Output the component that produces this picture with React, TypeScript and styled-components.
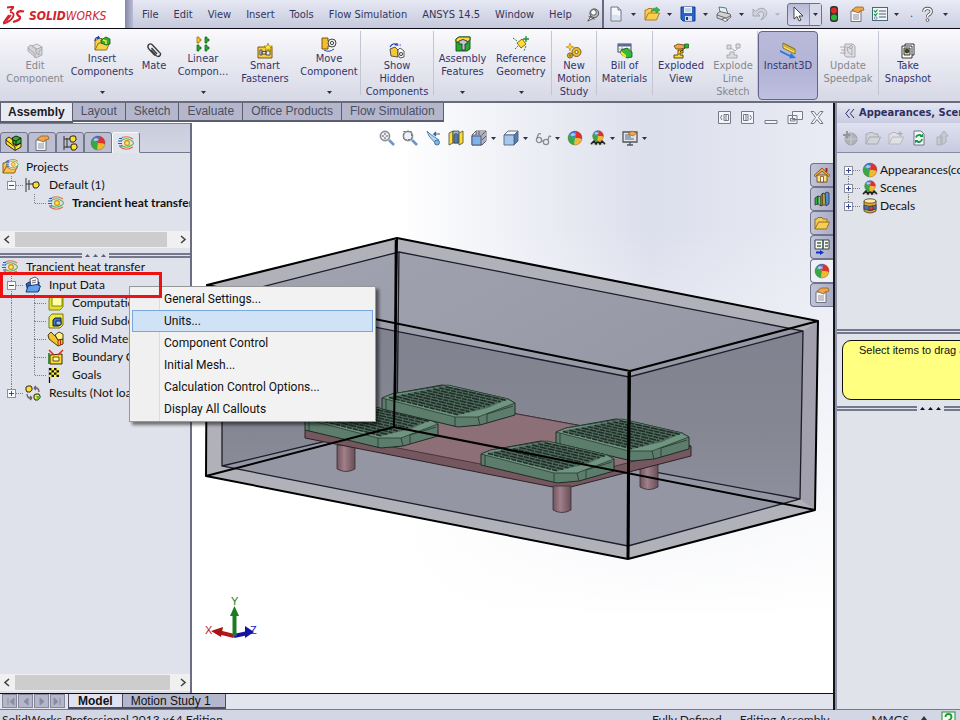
import React from "react";
import styled, { createGlobalStyle, css } from "styled-components";

const tahoma = '"DejaVu Sans Condensed", "DejaVu Sans", sans-serif';
const segoe = 'Lato, "Noto Sans", sans-serif';
const menuFont = 'Roboto, "Noto Sans", sans-serif';
const arial = '"Liberation Sans", Arial, sans-serif';

const Global = createGlobalStyle`
  * { box-sizing: border-box; }
  body { margin: 0; overflow: hidden; background: #dfe2ec; font-family: ${segoe}; font-size: 12px; }
  button { margin: 0; padding: 0; border: 0; background: none; font: inherit; color: inherit; cursor: default; }
  ul { margin: 0; padding: 0; list-style: none; }
  svg { display: block; flex: none; }
`;

/* ---------- icons ---------- */

const Ball = ({ x = 8, y = 8, r = 7 }: { x?: number; y?: number; r?: number }) => (
  <g transform={`translate(${x} ${y}) scale(${r / 7})`}>
    <path d="M0 0L-6-3.5A7 7 0 0 1 1-7Z" fill="#3474d8" />
    <path d="M0 0L1-7A7 7 0 0 1 7 1Z" fill="#e0322c" />
    <path d="M0 0L7 1A7 7 0 0 1-1 7Z" fill="#f2b92c" />
    <path d="M0 0L-1 7A7 7 0 0 1-6-3.5Z" fill="#37a843" />
    <circle r="7" fill="none" stroke="#444" strokeOpacity=".45" strokeWidth=".7" />
    <ellipse cx="-2" cy="-3.5" rx="2.2" ry="1.5" fill="#fff" opacity=".6" />
  </g>
);

const flow = (
  <g fill="none" strokeWidth="1.1">
    <path d="M2 4Q8-.5 15 4M2 12Q8 16.500 15 12" stroke="#e06a50" />
    <path d="M3 6Q8 1.500 14 6M3 10Q8 14.500 14 10" stroke="#58b858" />
    <path d="M1 3.500H4M0 6H4M0 8.500H4M1 11H4" stroke="#2a5ad0" />
    <path d="M14 6Q17 8 14 10" stroke="#58b858" />
    <circle cx="9" cy="8" r="2.400" fill="#ffe84a" stroke="#d08a20" />
  </g>
);

const hand = <path d="M3 4L7 1L14 1L15 4L11 5L10 7L7 6Z" fill="#eda64e" stroke="#90540e" strokeWidth=".7" />;

const gear = (gray = false) => (
  <g stroke={gray ? "#aaa" : "#5a4200"} strokeWidth=".8">
    <circle cx="10.500" cy="9" r="4.500" fill={gray ? "#ddd" : "#f1bd32"} />
    <circle cx="10.500" cy="9" r="1.600" fill="#fff" />
    <circle cx="4" cy="12.500" r="2.600" fill={gray ? "#ddd" : "#f1bd32"} />
    <circle cx="4" cy="12.500" r=".8" fill="#fff" />
  </g>
);

const part = (main: string, light: string, edge: string) => (
  <g stroke={edge} strokeWidth=".9" strokeLinejoin="round">
    <path d="M1 4L4 2L9 6L15 4V12L9 15L1 8Z" fill={main} />
    <path d="M5 3L10 1L15 4L10 6Z" fill={light} />
    <path d="M9 6V10L12 12V8L15 6M1 5L8 11V15" fill="none" />
  </g>
);

const folder = (fill: string, edge: string) => (
  <g stroke={edge} strokeWidth=".9" strokeLinejoin="round">
    <path d="M1 14V4H3L4 2.500H8L9 4H13V7" fill={fill} />
    <path d="M1 14L4.500 7H15.500L12.500 14Z" fill={fill} />
  </g>
);

const magnifier = (
  <g>
    <circle cx="6" cy="6" r="4.600" fill="#eef2f8" stroke="#8a8e98" strokeWidth="1.600" />
    <path d="M10 10L15 15" stroke="#6f96c4" strokeWidth="2.600" />
  </g>
);

const cube = (front: string) => (
  <g stroke="#56657c" strokeWidth=".9" strokeLinejoin="round">
    <path d="M1 5L5 1H15L11 5Z" fill="#f4f8fd" />
    <path d="M11 5L15 1V11L11 15Z" fill="#4a7cc4" />
    <path d="M1 5H11V15H1Z" fill={front} />
  </g>
);

const page = (
  <path d="M3 1H10L13 4V15H3Z" fill="#f4f8fc" stroke="#667" strokeWidth=".9" />
);

const propPage = (
  <g>
    <path d="M2 5H12V15.500H2Z" fill="#f6f6f6" stroke="#667" strokeWidth=".9" />
    <path d="M4 9H10M4 11H10M4 13H10" stroke="#8a93a8" />
    {hand}
  </g>
);

const yBlock = (x: number, y: number, c = "#ffdf2c") => (
  <path d={`M${x} ${y + 1}L${x + 2} ${y}H${x + 5}L${x + 6} ${y + 2}V${y + 4}L${x + 4} ${y + 6}H${x + 1}L${x} ${y + 4}Z`} fill={c} stroke="#111" strokeWidth=".9" />
);

const icons: Record<string, React.ReactNode> = {
  ball: <Ball />,
  flow,
  prop: propPage,
  folder: folder("#f6cd57", "#8a6414"),
  folderGray: folder("#d2d4da", "#a2a4aa"),
  ballGray: (
    <g fill="#b0b2b8" stroke="#94969c" strokeWidth=".8">
      <circle cx="9" cy="9" r="6" /><path d="M1 5H9M5 1V9" strokeWidth="2" /><path d="M9 3V15M3 9H15" stroke="#d4d4da" />
    </g>
  ),
  newFolderGray: <g>{folder("#e0e1e6", "#b2b4ba")}<path d="M12 1V6M9.500 3.500H14.500" stroke="#aaa" /></g>,
  refresh: (
    <g>{page}<path d="M5 7.500A3.200 3.200 0 0 1 10.500 6M11 9A3.200 3.200 0 0 1 5.500 11" fill="none" stroke="#159a3a" strokeWidth="1.800" /><path d="M8.500 7H12V3.500ZM7.500 10H4V13.500Z" fill="#159a3a" /></g>
  ),
  upGray: <path d="M3 15V7H7V15ZM6 6L10 1L14 6H12V12L8 15V6Z" fill="#c8cad0" stroke="#a4a6ac" strokeWidth=".8" />,
  helpBox: (
    <g><rect x="2" y="0" width="13" height="16" fill="#f2fbf0" stroke="#2a8a3a" /><path d="M5.500 5Q5.500 2 8.500 2T11.500 5Q11.500 7 8.500 8.500V10" fill="none" stroke="#1d9a34" strokeWidth="1.800" /></g>
  ),
  newDoc: <g>{page}<path d="M10 1V4H13" fill="#c6d8e8" stroke="#667" strokeWidth=".8" /><path d="M4 9Q8 8 12 10V14H4Z" fill="#d5e4f0" /></g>,
  open: <g>{folder("#f9cd4d", "#a4721c")}<path d="M7 6Q8 1 12 2.500V1L16 4L12 7V5Q9 4 7 6Z" fill="#3ab648" stroke="#1d7d2a" strokeWidth=".5" /></g>,
  save: (
    <g><path d="M1 1H15V15H3L1 13Z" fill="#2a63c8" stroke="#173c86" /><path d="M4 1H12V7H4Z" fill="#eef3fb" /><path d="M5 10H12V15H5Z" fill="#cfd9ea" /><path d="M6 11H8V14H6Z" fill="#173c86" /><path d="M5 3H11M5 5H11" stroke="#8aa3cc" strokeWidth=".8" /></g>
  ),
  print: (
    <g stroke="#555" strokeWidth=".8"><path d="M3 1L10 2L12 8L4 6Z" fill="#dff0fb" /><path d="M1 8L4 5.500L14 8L15 11L10 15L1 12Z" fill="#d2d2d2" /><path d="M1 9L10 12L15 9.500" fill="none" /><path d="M6 13L9 12L12 14L9 15.500Z" fill="#fff" /></g>
  ),
  undo: <path d="M1 3V10H8L5.500 7.500Q8 5 10.500 6Q13.500 8 9 14Q16 10 14.500 5.500Q12 .5 6 3.200L3.500 5.500Z" fill="#d0d2da" stroke="#9a9da8" strokeWidth=".8" />,
  cursor: <path d="M4 1V13L7 10.500L9 15L11 14L9 10H13Z" fill="#fff" stroke="#333" strokeWidth=".9" />,
  traffic: (
    <g><rect x="4" y="0" width="8" height="16" rx="3" fill="#333" /><circle cx="8" cy="4.500" r="3" fill="#dc2c22" /><circle cx="8" cy="11.500" r="3" fill="#28b83c" /></g>
  ),
  options: (
    <g><rect x=".5" y="1.500" width="15" height="13" fill="#eef6f4" stroke="#486a78" /><path d="M7 5H14M7 8H14M7 11H14" stroke="#557" /><path d="M2 4.500L3.500 6L5.500 3.500M2 8L3.500 9.500L5.500 7" fill="none" stroke="#1a9a4a" strokeWidth="1.200" /><path d="M2.500 11H5V13H2.500Z" fill="#fff" stroke="#486a78" strokeWidth=".6" /></g>
  ),
  help: <g fill="none"><path d="M4 5Q4 1.500 8 1.500T12 5Q12 7 9 8.500Q8 9 8 11" stroke="#555" strokeWidth="3.400" /><path d="M4 5Q4 1.500 8 1.500T12 5Q12 7 9 8.500Q8 9 8 11" stroke="#fff" strokeWidth="1.600" /><circle cx="8" cy="14" r="1.500" fill="#fff" stroke="#555" /></g>,
  pin: <g stroke="#444" strokeWidth="1"><path d="M6 9L2 15L8 12M3 9.500L10 13" fill="#fff" /><circle cx="9.500" cy="6" r="5" fill="#b4b7c2" /><circle cx="8.500" cy="5" r="3.200" fill="#fff" /></g>,
  editComp: part("#d4d4d8", "#e6e6ea", "#a6a6aa"),
  insertComp: (
    <g>{folder("#f8d24a", "#8a6412")}<path d="M7 4L12 1L16 3V8L12 9L7 7Z" fill="#2fae32" stroke="#0c5a10" strokeWidth=".8" /><path d="M9 4L12 5V8" fill="none" stroke="#ffe84a" strokeWidth="1.500" /><path d="M1 5Q1 1 5 1.500L4 0M5 1.500L3.500 3" fill="none" stroke="#1538b8" strokeWidth="1.200" /></g>
  ),
  mate: <path d="M5 7L10 12.500Q12.500 14.500 14 12.500T13 9L6.500 2Q4.500 0 2.800 1.600T2.500 5.500L9 12.500M5.500 5L11 11" fill="none" stroke="#3c3c3c" strokeWidth="1.400" />,
  linear: (
    <g strokeWidth=".7">
      {[[2, 1], [10, 1], [2, 9], [10, 9]].map(([x, y], i) => (
        <path key={i} d={`M${x} ${y}H${x + 2}V${y + 2}H${x + 4}V${y + 4}H${x + 2}V${y + 6}H${x}Z`} fill={i ? "#22ae2c" : "#ffd42a"} stroke={i ? "#0c5a10" : "#8a5c00"} />
      ))}
    </g>
  ),
  smart: (
    <g><path d="M1 4H15V15H1Z" fill="#f5cc45" stroke="#7c5808" /><path d="M3 7H5V12H3ZM5 8.500H9V11H5ZM9 8H13V12H9Z" fill="#ececf0" stroke="#333" strokeWidth=".8" /><path d="M11 0L12 3L15.500 3L13 5L14 8L11 6L8.500 8L9 5L7 3H10Z" fill="#ffe93a" stroke="#8a6a00" strokeWidth=".6" /></g>
  ),
  move: (
    <g><path d="M1 2H7V5H10V10H7V13H1Z" fill="#f4bc30" stroke="#6b4a00" strokeWidth=".9" /><circle cx="11" cy="7" r="4" fill="#ececf0" stroke="#444" /><circle cx="11" cy="7" r="1.600" fill="#fff" stroke="#444" /><path d="M3 14Q8 17 13 13" stroke="#2244b0" fill="none" /></g>
  ),
  hidden: (
    <g stroke="#333" strokeWidth=".8"><path d="M1 6L6 4L9 7V14L2 13Z" fill="#f4c832" /><path d="M9 7L11 5L15 8V14L11 15L9 12Z" fill="#fff" /><circle cx="12" cy="11" r="1.700" fill="#ccc" /><path d="M1 4Q4-1 8 2L8 0M8 2H6" stroke="#2040b8" strokeWidth="1.200" fill="none" /><path d="M8 2H12" stroke="#2040b8" strokeDasharray="1.500 1" /></g>
  ),
  asm: (
    <g stroke="#0c5012" strokeWidth=".9"><path d="M1 3L4 1H15V13L12 15H1Z" fill="#28a834" /><path d="M1 3L4 1H15V4L12 6H1Z" fill="#ffd83c" /><path d="M4 5Q8 2 12 5V8H10V14H7V8H4Z" fill="#c2c6cc" stroke="#333" /></g>
  ),
  ref: (
    <g><path d="M4 7L9 3L13 8L8 12Z" fill="#ffdf30" stroke="#7a5c00" strokeWidth=".9" /><path d="M0 2L4 5M13 10L11 15M2 13L5 10" stroke="#1c8c2c" strokeDasharray="2 1" /><path d="M13 0V6M10 3H16" stroke="#1c8c2c" strokeWidth="1.300" /></g>
  ),
  motion: <g>{gear()}<path d="M4 0L5 3L8 4L5 5L4 8L3 5L0 4L3 3Z" fill="#ffd62e" stroke="#b06a00" strokeWidth=".5" /></g>,
  bom: (
    <g><rect x="1" y="1" width="13" height="8" fill="#fff" stroke="#445" /><rect x="1" y="1" width="13" height="2.500" fill="#5a6a94" /><path d="M5 1V9M1 6H14" stroke="#889" strokeWidth=".7" /><path d="M4 7L10 5L15 9V14L10 15L4 11Z" fill="#34b83c" stroke="#0c5a10" strokeWidth=".8" /><path d="M4 8L9 12V15L4 11Z" fill="#ffdf30" /></g>
  ),
  exploded: (
    <g><path d="M5 7H10V10H7V12H10V15H1V12H5Z" fill="#ffd92c" stroke="#4c3a00" strokeWidth=".9" /><path d="M7 9L13 4" stroke="#222" /><path d="M1 3L5 1L11 2L12 5L7 6L3 6Z" fill="#eda64e" stroke="#6b3a05" strokeWidth=".8" /><path d="M11.500 1H15.500V5H11.500Z" fill="#2cae38" stroke="#0c5a10" strokeWidth=".7" /></g>
  ),
  explodeLine: (
    <g fill="#dcdce0" stroke="#a4a4aa" strokeWidth=".9"><path d="M2 2H6V6H2ZM11 1H15V5H11ZM5 9H9V12H12V15H2V12H5Z" /><path d="M6 5L10 8L13 5" fill="none" /></g>
  ),
  instant: (
    <g><path d="M3 0L15 6V11L3 5Z" fill="#ffe253" stroke="#6f5900" strokeWidth=".8" /><path d="M5 1V4M7 2V5M9 3V6M11 4V7M13 5V8" stroke="#6f5900" strokeWidth=".7" /><path d="M0 7L10 12L11 10L16 15L9 15.500L10 14L0 9Z" fill="#2b7ad8" /></g>
  ),
  speedpak: (
    <g fill="#dedee2" stroke="#a4a4aa" strokeWidth=".9"><path d="M5 1H13L15 3V14H6L4 11Z" /><path d="M0 4H6M1 7H6M0 10H6M7 4L12 6V12L8 9Z" /><circle cx="11" cy="4" r="1.500" /></g>
  ),
  snapshot: (
    <g stroke="#222" strokeWidth=".9"><path d="M5 1H14V12H5Z" fill="#fff" /><path d="M2 3H12V15H2Z" fill="#fff" /><path d="M4 5H10V12H4Z" fill="#d0d49c" /><circle cx="7" cy="8" r="1.800" fill="#444" /></g>
  ),
  asmTree: (
    <g stroke="#14140a" strokeWidth=".9" strokeLinejoin="round"><path d="M0 4L3 2L7 5V9L10 11L15 8V12L9 15.500L0 9Z" fill="#ffdf2c" /><path d="M6 3L10 1L15 3V8L10 10L7 8V5Z" fill="#2fae32" /><path d="M7 5L10 6L15 3M10 6V10M0 5L9 12V15" fill="none" /></g>
  ),
  config: <g><path d="M2 1V15M5 3V13M2 4H9M2 12H9" stroke="#333" fill="none" />{yBlock(8, 1)}{yBlock(9, 9)}</g>,
  configOne: <g><path d="M1 1V15M4 3V13M1 7H8" stroke="#333" fill="none" />{yBlock(8, 5)}</g>,
  projects: <g>{folder("#f5c64c", "#84560c")}<g transform="translate(4 -1) scale(.8)"><circle cx="8" cy="8" r="6" fill="#f2f4e8" />{flow}</g></g>,
  input: (
    <g><path d="M1 7L4 5H14V14H3Z" fill="#2a62c8" stroke="#102c6a" strokeWidth=".9" /><path d="M5 2L10 0L13 2V9L6 10Z" fill="#fff" stroke="#334" strokeWidth=".8" /><path d="M7 4L11 3M7 6L11 5" stroke="#334" strokeWidth=".7" /><path d="M1 15L3 9L12 7.500L15.500 9L13 15Z" fill="#62a2ec" stroke="#102c6a" strokeWidth=".9" /></g>
  ),
  domain: <g stroke="#7a7a00" strokeWidth=".9"><path d="M1 4L4 1H15V12L12 15H1Z" fill="#e2e22c" /><path d="M4 2H14V11H4Z" fill="#ffffa8" /></g>,
  fluid: <g><path d="M1 4L4 1H15V12L12 15H1Z" fill="#f0ee3c" stroke="#6a6a00" strokeWidth=".9" /><path d="M5 7L7 5H13V11L11 13H5Z" fill="#3c78c8" stroke="#101c4a" /><path d="M8 8H13V12H8Z" fill="#9cbce8" stroke="#101c4a" strokeWidth=".9" /></g>,
  solid: <g stroke="#3c2c00" strokeWidth=".9"><path d="M0 4L3 1L8 6L10 9L15 8V13L10 15L1 8Z" fill="#f2c42e" /><path d="M7 4L11 1L15 3V8L10 9Z" fill="#fff28a" /><path d="M10 9V15M12.500 9V14" stroke="#b01c10" /></g>,
  boundary: <g><path d="M2 15V6L14 5V15Z" fill="#ffdb30" stroke="#3c2c00" /><path d="M5 8H11V12H5Z" fill="#fff8b0" stroke="#3c2c00" strokeWidth=".8" /><path d="M1 1L6 6M15 1L10 6" stroke="#e02c1c" strokeWidth="1.500" /><path d="M1 4V15" stroke="#1a7c2c" strokeWidth="1.600" /></g>,
  goals: <g><path d="M1.500 1V16" stroke="#111" strokeWidth="1.300" /><path d="M1 1H11V10H1Z" fill="#fff04a" />{[0, 1, 2, 3].flatMap((r) => [0, 1].map((c) => <rect key={`${r}${c}`} x={1 + c * 5 + (r % 2) * 2.5} y={1 + r * 2.25} width="2.500" height="2.250" fill="#111" />))}</g>,
  results: <g>{yBlock(1, 1)}{yBlock(9, 9)}<path d="M11 11H15V13L13 15Z" fill="#4cbc40" /><path d="M9 3H12Q14 4 14 7M9 3L11 1M9 3L11 5M7 13H4Q2 12 2 9M7 13L5 11M7 13L5 15" fill="none" stroke="#666" strokeWidth="1.400" /></g>,
  zoomFit: <g>{magnifier}<path d="M6 3V9M3 6H9" stroke="#555" strokeDasharray="2 2" /></g>,
  zoomArea: <g>{magnifier}<rect x="1.500" y="1.500" width="8" height="8" fill="none" stroke="#777" strokeDasharray="2 1.500" /></g>,
  prevView: <g><path d="M2 1L5 4L14 10L11 14L4 6Z" fill="#b8d6f2" stroke="#4878a8" strokeWidth=".9" /><circle cx="12" cy="12.500" r="2.500" fill="#7fb2e2" stroke="#4878a8" /><path d="M15 4H9L11 2M9 4L11 6" fill="none" stroke="#2a5c98" strokeWidth="1.200" /></g>,
  section: <g stroke="#4a4a3a" strokeWidth=".8"><path d="M1 3L5 1V13L1 15Z" fill="#ffdc30" /><path d="M5 1H11V13H5Z" fill="#8cb4e2" /><path d="M11 3L15 1V13L11 15Z" fill="#ffdc30" /><path d="M6 5Q8 2 10 5V13H6Z" fill="#4c7cb8" /></g>,
  orient: (
    <g stroke="#445" strokeWidth=".8" fill="none"><path d="M1 5L5 1H15V11L11 15H1Z" fill="#f8fafd" /><path d="M1 6H10V15H1Z" fill="#7cb4ea" /><path d="M11 5L15 1M5 1V5M11 5V15M1 5H11M8 1V5M5 3H13M13 3V13M11 10L15 6" /></g>
  ),
  display: cube("#a6c8ee"),
  glasses: <g fill="none" stroke="#8a8c94" strokeWidth="1.300"><circle cx="4" cy="10" r="2.600" /><circle cx="11" cy="12" r="2.600" /><path d="M2 9Q3 2 6 4M6.500 10.500L8.500 11.500M13 10Q14 4 16 7" /></g>,
  scene: <g><path d="M0 15L4 10H12L16 15Z" fill="#ccc" /><path d="M1 14L4 11L6 14L8 11L10 14L12 11L15 14" fill="none" stroke="#222" strokeWidth="1.700" /><Ball y={6} r={5.500} /></g>,
  monitor: <g><path d="M1 2H15V12H1Z" fill="#dfe6ee" stroke="#555" strokeWidth="1.300" /><path d="M3 5H9M3 7H9M3 9H12" stroke="#567" /><path d="M5 15H11M8 12V15" stroke="#555" strokeWidth="1.300" /><path d="M6 4L10 1L15 3L11 6Z" fill="#eda64e" stroke="#90540e" strokeWidth=".6" /></g>,
  home: <g><path d="M3 8H13V15H3Z" fill="#fbe28a" stroke="#7a4a0a" strokeWidth=".9" /><path d="M0 8.500L8 1L16 8.500L14.500 9.500L8 4L1.500 9.500Z" fill="#f2a82c" stroke="#7a4a0a" strokeWidth=".8" /><path d="M12.500 1V5" fill="none" stroke="#a22" strokeWidth="2" /><path d="M6.500 9.500H9.500V15H6.500Z" fill="#fff" stroke="#7a4a0a" strokeWidth=".8" /></g>,
  library: <g stroke="#222" strokeWidth=".7"><path d="M1 7L4 5V13L1 14Z" fill="#2fae3c" /><path d="M4 5L7 6V15L4 13Z" fill="#73d27c" /><path d="M7 4L9 2V14L7 15Z" fill="#d2a018" /><path d="M9 2L11 3V14H9Z" fill="#ffe264" /><path d="M11 2L13 1L15 2V13L12 15Z" fill="#4c8ede" /></g>,
  palette: <g><path d="M1 1H9V10H1ZM9 1H15V10H9Z" fill="#f8f8f0" stroke="#345" /><path d="M3 4H7M3 7H7M11 4H14M11 7H14" stroke="#486a3a" strokeWidth="1.500" /><path d="M2 12.500H6V11L10 13.500L6 16V14.500H2Z" fill="#1630c8" /></g>,
  decals: <g stroke="#433" strokeWidth=".8"><path d="M2 3V13Q8 17 14 13V3Z" fill="#e2ad2a" /><path d="M2 7Q8 10 14 7V11Q8 14 2 11Z" fill="#3c78c8" /><path d="M7 8.500L11 8V12L7 12.500Z" fill="#e33c2c" /><ellipse cx="8" cy="3" rx="6" ry="2.200" fill="#ffee9a" /></g>,
};

const Icon = ({ name, size = 16 }: { name: string; size?: number }) => (
  <svg width={size} height={size} viewBox="0 0 16 16" overflow="visible" aria-hidden="true">{icons[name]}</svg>
);

const Caret = ({ faded }: { faded?: boolean }) => (
  <svg width="5" height="3" viewBox="0 0 5 3" aria-hidden="true"><path d="M0 0H5L2.500 3Z" fill={faded ? "#b4b6c0" : "#2e3040"} /></svg>
);

/* ---------- top bar ---------- */

const Window = styled.div`
  display: flex;
  flex-direction: column;
  height: 100vh;
  overflow: hidden;
  color: #111;
`;

const TopBar = styled.header`
  display: flex;
  flex: none;
  height: 29px;
  border-bottom: 1px solid #0a0a14;
  background: linear-gradient(#e6e8f3, #c6c9db);
  font: 11px/16px ${tahoma};
  color: #33355f;
`;

const Logo = styled.div`
  display: flex;
  flex: none;
  align-items: center;
  gap: 4px;
  width: 125px;
  padding: 3px 0 0 3px;
  background: #fff;
  color: #d2232e;
  font: italic 12px/16px ${tahoma};
  b { font-weight: 700; }
`;

const LogoEdge = styled.div`
  flex: none;
  width: 8px;
  background: linear-gradient(90deg, #8588a8, #b9bcd2);
`;

const MenuBar = styled.nav`
  display: flex;
  flex: none;
  align-items: center;
  gap: 15px;
  padding: 2px 2px 0 9px;
  border-right: 2px solid #676a80;
  white-space: nowrap;
  > button:last-child { margin-left: -1px; }
`;

const QuickBar = styled.div`
  display: flex;
  flex: 1;
  align-items: center;
  padding-left: 3px;
  background: linear-gradient(#e9ebf6, #cccfe1);
  overflow: hidden;
`;

const QuickButton = styled.button<{ $w?: number }>`
  display: flex;
  flex: none;
  align-items: center;
  justify-content: center;
  width: ${(p) => p.$w ?? 18}px;
  height: 24px;
`;

const SelectTool = styled.div`
  display: flex;
  flex: none;
  width: 35px;
  height: 23px;
  align-items: center;
  margin-right: 3px;
  border: 1px solid #6d708a;
  border-radius: 3px;
  background: linear-gradient(#b7bad6, #d5d7ea);
  ${QuickButton} + ${QuickButton} { border-left: 1px solid #8c8fa8; background: #d8daea; height: 21px; }
`;

const Spacer = styled.span<{ $w: number }>`
  flex: none;
  width: ${(p) => p.$w}px;
  text-align: center;
`;

const menus = ["File", "Edit", "View", "Insert", "Tools", "Flow Simulation", "ANSYS 14.5", "Window", "Help"];

/* ---------- ribbon ---------- */

const Ribbon = styled.div`
  display: flex;
  flex: none;
  height: 74px;
  padding-top: 2px;
  border-bottom: 2px solid #6a6c7c;
  background: linear-gradient(#fafafd, #e9eaf1 45%, #d6d8e6);
  overflow: hidden;
`;

const RibbonButton = styled.button<{ $w: number; $drop?: boolean; $active?: boolean }>`
  display: flex;
  flex: none;
  flex-direction: column;
  align-items: center;
  width: ${(p) => p.$w}px;
  height: 69px;
  padding-top: ${(p) => (p.$drop ? 5 : 12)}px;
  font: 11px/13px ${tahoma};
  color: #33356b;
  white-space: pre;
  &:disabled { color: #87888f; }
  ${(p) => p.$active && css`
    padding-top: 11px;
    border: 1px solid #62648a;
    border-radius: 4px;
    background: linear-gradient(#b9bad9, #b3b4d6 60%, #bfc1e0);
  `}
  > svg:last-child:not(:first-child) { margin-top: auto; margin-bottom: 6px; }
`;

const Divider = styled.span`
  flex: none;
  width: 1px;
  height: 64px;
  background: #c3c5d2;
`;

type RB = { icon: string; label: string; w: number; drop?: boolean; off?: boolean; active?: boolean } | "|";
const ribbon: RB[] = [
  { icon: "editComp", label: "Edit\nComponent", w: 70, off: true },
  { icon: "insertComp", label: "Insert\nComponents", w: 64, drop: true },
  { icon: "mate", label: "Mate", w: 40 },
  { icon: "linear", label: "Linear\nCompon...", w: 58, drop: true },
  { icon: "smart", label: "Smart\nFasteners", w: 66 },
  { icon: "move", label: "Move\nComponent", w: 62, drop: true },
  "|",
  { icon: "hidden", label: "Show\nHidden\nComponents", w: 72 },
  "|",
  { icon: "asm", label: "Assembly\nFeatures", w: 57, drop: true },
  { icon: "ref", label: "Reference\nGeometry", w: 60, drop: true },
  "|",
  { icon: "motion", label: "New\nMotion\nStudy", w: 44 },
  "|",
  { icon: "bom", label: "Bill of\nMaterials", w: 55 },
  "|",
  { icon: "exploded", label: "Exploded\nView", w: 56 },
  { icon: "explodeLine", label: "Explode\nLine\nSketch", w: 48, off: true },
  "|",
  { icon: "instant", label: "Instant3D", w: 60, active: true },
  { icon: "speedpak", label: "Update\nSpeedpak", w: 60, off: true },
  "|",
  { icon: "snapshot", label: "Take\nSnapshot", w: 58 },
];

/* ---------- body ---------- */

const Body = styled.div`
  display: flex;
  flex: 1;
  min-height: 0;
`;

const Main = styled.main`
  position: relative;
  display: flex;
  flex: 1;
  flex-direction: column;
  min-width: 0;
  border-right: 2px solid #15151c;
  background:
    linear-gradient(rgba(255, 255, 255, 0), rgba(255, 255, 255, 0) 20%, #fff 85%),
    linear-gradient(90deg, #fff 48%, #dcdfec 78%, #e9ebf4);
`;

const TabRow = styled.div`
  display: flex;
  flex: none;
  height: 20px;
`;

const CommandTab = styled.button<{ $active?: boolean }>`
  flex: none;
  height: 19px;
  padding: 0 8px 1px;
  border: solid #5c5e70;
  border-width: 0 1px 2px 0;
  background: #b4b7cc;
  color: #4c4e62;
  font: 12px/16px ${arial};
  ${(p) => p.$active && css`
    height: 20px;
    background: #e9ebf3;
    color: #1c1c24;
    font-weight: bold;
    border-left-width: 1px;
    padding: 0 7px 1px;
  `}
`;

const WindowButtons = styled.div`
  display: flex;
  gap: 7px;
  margin: 8px 7px 0 auto;
`;

const Columns = styled.div`
  display: flex;
  flex: 1;
  min-height: 0;
`;

const SidePanel = styled.aside`
  display: flex;
  flex: none;
  flex-direction: column;
  width: 192px;
  border-right: 2px solid #6b6d82;
  background: #dfe2ea;
`;

const SideTabs = styled.div`
  display: flex;
  flex: none;
  height: 30px;
  padding-top: 8px;
  background: linear-gradient(#c9ccdc, #d3d6e2);
  border-top: 1px solid #7a7c90;
  box-shadow: inset 0 -1px #74768c;
`;

const SideTab = styled.button<{ $active?: boolean }>`
  display: flex;
  align-items: center;
  justify-content: center;
  width: 28px;
  border: 1px solid #74768c;
  border-radius: 3px 3px 0 0;
  background: #bcbfd2;
  ${(p) => p.$active && css`background: #e2e5ec; border-color: #f8f8fc #74768c transparent #fff;`}
`;

const Tree = styled.ul<{ $h?: number; $top?: number }>`
  ${(p) => (p.$h ? `flex: none; height: ${p.$h}px;` : "flex: 1; min-height: 0;")}
  padding-top: ${(p) => p.$top ?? 0}px;
  overflow: hidden;
`;

const TreeRow = styled.li<{ $bold?: boolean }>`
  display: flex;
  align-items: center;
  height: 18px;
  white-space: nowrap;
  font-size: 12px;
  line-height: 18px;
  font-weight: ${(p) => (p.$bold ? 700 : 400)};
`;

const IconSlot = styled.span<{ $w: number }>`
  flex: none;
  width: ${(p) => p.$w}px;
  padding-left: 2px;
`;

type Guide = "plus" | "minus" | "plusFirst" | "plusLast" | "minusLast" | "tee" | "end" | "pipe" | "gap";
const GuideCell = ({ kind }: { kind: Guide }) => {
  const box = kind.startsWith("plus") || kind.startsWith("minus");
  const top = kind !== "plusFirst" && kind !== "gap";
  const bottom = !["plusLast", "minusLast", "end", "gap"].includes(kind);
  return (
    <svg width="23" height="18" aria-hidden="true">
      <g stroke="#7c7e88" strokeDasharray="1 1" fill="none">
        {top && <path d="M11.500 0V9" />}
        {bottom && <path d="M11.500 9V18" />}
        {kind !== "pipe" && kind !== "gap" && <path d="M12 9.500H24" />}
      </g>
      {box && (
        <g>
          <rect x="7.500" y="5.500" width="8" height="8" fill="#fafafc" stroke="#8c8e9a" />
          <path d={kind.startsWith("plus") ? "M9 9.500H14M11.500 7V12" : "M9 9.500H14"} stroke="#33489a" />
        </g>
      )}
    </svg>
  );
};

type Row = { g: Guide[]; icon: string; label: string; bold?: boolean };
const Rows = ({ rows, slot = 26 }: { rows: Row[]; slot?: number }) => (
  <>
    {rows.map((r) => (
      <TreeRow key={r.label} $bold={r.bold}>
        {r.g.map((k, i) => <GuideCell key={i} kind={k} />)}
        <IconSlot $w={slot}><Icon name={r.icon} /></IconSlot>
        {r.label}
      </TreeRow>
    ))}
  </>
);

const projectRows: Row[] = [
  { g: [], icon: "projects", label: "Projects" },
  { g: ["minusLast"], icon: "configOne", label: "Default (1)" },
  { g: ["gap", "end"], icon: "flow", label: "Trancient heat transfer", bold: true },
];
const studyRows: Row[] = [
  { g: [], icon: "flow", label: "Trancient heat transfer" },
  { g: ["minus"], icon: "input", label: "Input Data" },
  { g: ["pipe", "tee"], icon: "domain", label: "Computational Domain" },
  { g: ["pipe", "tee"], icon: "fluid", label: "Fluid Subdomains" },
  { g: ["pipe", "tee"], icon: "solid", label: "Solid Materials" },
  { g: ["pipe", "tee"], icon: "boundary", label: "Boundary Conditions" },
  { g: ["pipe", "end"], icon: "goals", label: "Goals" },
  { g: ["plusLast"], icon: "results", label: "Results (Not loaded)" },
];
const paneRows: Row[] = [
  { g: ["plusFirst"], icon: "ball", label: "Appearances(color)" },
  { g: ["plus"], icon: "scene", label: "Scenes" },
  { g: ["plusLast"], icon: "decals", label: "Decals" },
];

const ScrollTrack = styled.div<{ $end: number }>`
  display: flex;
  flex: none;
  align-items: center;
  height: 17px;
  padding: 0 2px;
  background: #f0f0f0;
  > i { flex: 1; height: 15px; margin: 0 ${(p) => p.$end}px 0 4px; background: #cdcdcd; }
`;

const Scrollbar = ({ end }: { end: number }) => (
  <ScrollTrack $end={end}>
    <button aria-label="Scroll left"><svg width="9" height="9"><path d="M7 1L3 4.500L7 8" fill="none" stroke="#444" strokeWidth="1.600" /></svg></button>
    <i />
    <button aria-label="Scroll right"><svg width="9" height="9"><path d="M2 1L6 4.500L2 8" fill="none" stroke="#444" strokeWidth="1.600" /></svg></button>
  </ScrollTrack>
);

const Splitter = styled.div<{ $shift?: number }>`
  display: flex;
  flex: none;
  justify-content: center;
  height: 5px;
  padding-left: ${(p) => p.$shift ?? 0}px;
  border: solid #74788c;
  border-width: 2px 0;
  background: #dfe2ea;
  > svg { margin-top: -2px; background: #dfe2ea; }
`;

const Grip = ({ dark }: { dark?: boolean }) => (
  <svg width="27" height="5"><path d="M3 4L5.500 1L8 4ZM11 4L13.500 1L16 4ZM19 4L21.500 1L24 4Z" fill={dark ? "#111" : "#5c6078"} /></svg>
);

const Viewport = styled.section`
  position: relative;
  display: flex;
  flex: 1;
  flex-direction: column;
  min-width: 0;
  overflow: hidden;
`;

const Canvas = styled.svg`
  position: absolute;
  inset: 0;
  width: 100%;
  height: 100%;
`;

const ViewTools = styled.div`
  position: relative;
  display: flex;
  align-items: center;
  justify-content: center;
  gap: 7px;
  height: 30px;
  > button { display: flex; align-items: center; gap: 4px; }
`;

const PaneTabs = styled.div`
  position: relative;
  align-self: flex-end;
  margin-top: 10px;
  width: 23px;
`;

const PaneTab = styled.button<{ $active?: boolean }>`
  display: flex;
  align-items: center;
  justify-content: center;
  width: 23px;
  height: 24px;
  border: 1px solid #70738c;
  border-right: 0;
  border-radius: 4px 0 0 4px;
  background: ${(p) => (p.$active ? "#eef0f6" : "linear-gradient(90deg, #c2c5d8, #a9acc4)")};
`;

const BottomTabs = styled.div`
  display: flex;
  flex: none;
  height: 17px;
  padding-left: 2px;
  border-top: 1px solid #111;
  border-bottom: 1px solid #77798c;
  background: #e2e4ee;
  font: 12px/15px ${arial};
`;

const NavButton = styled.button`
  width: 15px;
  height: 14px;
  margin-right: 1px;
  border: 1px solid #85879a;
  background: #b4b7ca;
  display: flex;
  align-items: center;
  justify-content: center;
`;

const StudyTab = styled.button<{ $active?: boolean }>`
  padding: 0 ${(p) => (p.$active ? 9 : 14)}px 0 ${(p) => (p.$active ? 9 : 8)}px;
  border: solid #4c4e60;
  border-width: 0 1px 2px ${(p) => (p.$active ? 1 : 0)}px;
  background: ${(p) => (p.$active ? "#dfe2f0" : "#b4b7cc")};
  font-weight: ${(p) => (p.$active ? "bold" : "normal")};
  margin-left: ${(p) => (p.$active ? 2 : 0)}px;
`;

const RedFrame = styled.div`
  position: absolute;
  left: 0;
  top: 169px;
  width: 162px;
  height: 26px;
  border: 3px solid #ed1111;
  z-index: 3;
  pointer-events: none;
`;

const ContextMenu = styled.ul`
  position: absolute;
  left: 129px;
  top: 183px;
  width: 247px;
  padding: 1px 2px;
  border: 1px solid #979797;
  background: linear-gradient(90deg, #f0f0f0 29px, #dcdcdc 29px, #dcdcdc 30px, #f2f2f2 30px);
  box-shadow: 3px 3px 3px rgba(0, 0, 0, 0.5);
  z-index: 2;
`;

const MenuItem = styled.button<{ $hover?: boolean }>`
  display: block;
  width: 100%;
  height: 22px;
  padding-left: 31px;
  border: 1px solid ${(p) => (p.$hover ? "#78a8dc" : "transparent")};
  background: ${(p) => (p.$hover ? "#d0e2f5" : "transparent")};
  font: 12px/20px ${menuFont};
  text-align: left;
`;

/* ---------- task pane ---------- */

const TaskPane = styled.aside`
  display: flex;
  flex: none;
  flex-direction: column;
  width: 125px;
  border-left: 2px solid #8d90a6;
  background: #e0e3ea;
  overflow: hidden;
  white-space: nowrap;
`;

const PaneTitle = styled.h2`
  display: flex;
  flex: none;
  gap: 4px;
  align-items: center;
  margin: 0;
  height: 20px;
  padding-left: 8px;
  background: linear-gradient(#e3e5f2, #c9cce0);
  color: #2c2f62;
  font: bold 11px/16px ${tahoma};
`;

const PaneTools = styled.div`
  display: flex;
  flex: none;
  align-items: center;
  gap: 7px;
  height: 30px;
  padding-left: 5px;
  border-bottom: 1px solid #8a8ca4;
  background: linear-gradient(#dfe1f0, #c8cbe0);
`;

const Hint = styled.p`
  flex: none;
  width: 180px;
  height: 60px;
  margin: 6px 0 6px 5px;
  padding: 2px 0 0 16px;
  border: 1px solid #111;
  border-radius: 9px;
  background: #ffff80;
  font: 11px/15px ${arial};
`;

const PaneRest = styled.div`
  flex: 1;
  border-bottom: 1px solid #77798c;
`;

const StatusBar = styled.footer`
  display: flex;
  flex: none;
  height: 10px;
  padding: 2px 4px 0 2px;
  overflow: hidden;
  background: #d3d6e4;
  font: 12px/15px ${segoe};
  color: #1a1a28;
  white-space: nowrap;
  > span:first-child { flex: 1; }
`;

/* ---------- model drawing ---------- */

const fins = [0, 1, 2, 3, 4, 5, 6, 7, 8, 9];
const Chip = ({ x, y }: { x: number; y: number }) => (
  <g transform={`translate(${x} ${y})`} strokeLinejoin="round">
    <path d="M0 13L10 9L60 0L69 1L126 14L133 18V30L98 40L76 42L0 24Z" fill="#5d7d6c" stroke="#1f2c26" />
    <path d="M0 13L73 32H96L133 18L126 14L66 0L10 9Z" fill="#6f9580" stroke="#2a3b32" strokeWidth=".8" />
    <path d="M6 12L64 1L126 14L106 23L76 30Z" fill="#4d6a5c" />
    {fins.map((i) => (
      <path
        key={i}
        d={`M${7 + i * 6.3} ${12.5 - i * 1.2}L${77 + i * 5.2} ${30 - i * 1.65}`}
        stroke="#202c27"
        strokeWidth="1.500"
        strokeDasharray={i % 2 ? "7 1" : "5 1"}
        fill="none"
      />
    ))}
    <path d="M73 32V42M96 32L98 40M4 14V25M105 29V38M105 29L131 21" stroke="#24332b" strokeWidth=".8" fill="none" />
  </g>
);

const Leg = ({ x, y }: { x: number; y: number }) => (
  <path d={`M${x} ${y}V${y + 24}Q${x + 9} ${y + 29} ${x + 18} ${y + 24}V${y}Z`} fill="url(#leg)" stroke="#3a2c32" strokeWidth=".8" />
);

const Model = () => (
  <Canvas viewBox="192 123 641 570" preserveAspectRatio="xMidYMin meet" aria-label="Assembly model">
    <defs>
      <linearGradient id="shade" x1="0" y1="0" x2="0" y2="1"><stop offset="0" stopColor="#7f818e" /><stop offset=".55" stopColor="#858793" /><stop offset="1" stopColor="#9395a3" /></linearGradient>
      <linearGradient id="topf" x1="0" y1="0" x2="1" y2="1"><stop offset="0" stopColor="#a3a4b2" /><stop offset="1" stopColor="#8e909e" /></linearGradient>
      <linearGradient id="leg"><stop offset="0" stopColor="#70545c" /><stop offset=".4" stopColor="#a0808a" /><stop offset="1" stopColor="#684e56" /></linearGradient>
    </defs>
    <path d="M397 238L818 321L815 510L628 559L206 476L207 285Z" fill="#b1b1ba" />
    <path d="M818 321L815 510L800 499L803 331Z" fill="#a1a0ac" />
    <path d="M399 252L803 331L800 499L628 546L222 466V297Z" fill="url(#topf)" />
    <path d="M222 297L629 377L803 331L800 499L628 546L222 466Z" fill="url(#shade)" />
    <path d="M222 466L397 424L800 499L628 546Z" fill="#9496a4" />
    <g fill="none" stroke="#1c1d28" strokeWidth="1.300">
      <path d="M222 297L399 252L803 331L800 499L628 546L222 466ZM222 297L629 377L803 331M629 377L628 546M399 252L397 424M222 466L397 424L800 499" />
    </g>
    <Leg x={337} y={445} /><Leg x={640} y={463} />
    <path d="M305 430L430 398L691 446V456L563 489L305 438Z" fill="#75585f" stroke="#2e2026" />
    <path d="M305 430L430 398L691 446L563 480Z" fill="#8d6f77" stroke="#3c2a30" strokeWidth=".8" />
    <Leg x={553} y={486} />
    <Chip x={305} y={406} /><Chip x={382} y={385} /><Chip x={556} y={419} /><Chip x={481} y={441} />
    <g fill="none" stroke="#000" strokeWidth="2" strokeLinejoin="round">
      <path d="M397 238L818 321L815 510L628 559L206 476L207 285ZM207 285L630 371L818 321M630 371L628 559M397 238L394 427M206 476L394 427L815 510" />
    </g>
    <path d="M629 372L628 558" stroke="#000" strokeWidth="3" />
    <path d="M396 240L395 400" stroke="#000" strokeWidth="2.500" />
    <g>
      <path d="M234 636L218 632" stroke="#b01818" strokeWidth="4" /><path d="M223 627L211 631L221 637Z" fill="#a81414" />
      <path d="M234 636L248 633" stroke="#1414a0" strokeWidth="4" /><path d="M245 626L254 632L245 638Z" fill="#1414a0" />
      <path d="M234.500 636V615" stroke="#1c7c24" strokeWidth="4" /><path d="M230 616L234.500 606L239 616Z" fill="#1c7c24" />
      <g fontFamily="Liberation Sans" fontSize="11"><text x="205" y="634" fill="#c02020">X</text><text x="231" y="605" fill="#1c7c24">Y</text><text x="250" y="634" fill="#1a1ab8">Z</text></g>
    </g>
  </Canvas>
);

const winIcons = [
  ["Previous", "M.5 .5H12.500V12.500H.5ZM4 4L2.500 6.500L4 9M6 3.500H10.500V9.500H6ZM8 4V9"],
  ["Next", "M.5 .5H12.500V12.500H.5ZM9 4L10.500 6.500L9 9M2.500 3.500H7V9.500H2.500ZM5 4V9"],
  ["Minimize", "M1 9.500H13V12.500H1Z"],
  ["Restore", "M5.500 .5H15.500V8.500H5.500ZM1 4.500H10V12.500H1ZM3.500 7.500H8V10H3.500Z"],
  ["Close", "M1 .5H4L7 4.500L10 .5H13L8.500 6.500L13 12.500H10L7 8.500L4 12.500H1L5.500 6.500Z"],
];

const viewTools: [string, boolean][] = [["zoomFit", false], ["zoomArea", false], ["prevView", false], ["section", false], ["orient", true], ["display", true], ["glasses", true], ["ball", false], ["scene", true], ["monitor", true]];

export default function App() {
  return (
    <Window>
      <Global />
      <TopBar>
        <Logo>
          <svg width="22" height="19" viewBox="0 0 22 19" aria-hidden="true">
            <path d="M4 1.500L10 .8Q11 1.500 7 5" fill="none" stroke="#d2232e" strokeWidth="2" />
            <path d="M7 6Q12 6.500 10 11Q7 16 0 17.500Q3 13 6 9M3 15L8 9" fill="none" stroke="#d2232e" strokeWidth="1.800" />
            <path d="M21 5.500Q15 4 14 7.500Q14 9 17 11Q18 14 10 16" fill="none" stroke="#d2232e" strokeWidth="2.200" />
          </svg>
          <span><b>SOLID</b>WORKS</span>
        </Logo>
        <LogoEdge />
        <MenuBar>
          {menus.map((m) => <button key={m}>{m}</button>)}
          <button aria-label="Pin menu"><Icon name="pin" size={14} /></button>
        </MenuBar>
        <QuickBar>
          {["newDoc", "open", "save", "print", "undo"].map((n) => (
            <React.Fragment key={n}>
              <QuickButton aria-label={n}><Icon name={n} /></QuickButton>
              <QuickButton aria-label={`${n} options`}><Caret faded={n === "undo"} /></QuickButton>
            </React.Fragment>
          ))}
          <SelectTool>
            <QuickButton $w={21} aria-label="Select"><Icon name="cursor" /></QuickButton>
            <QuickButton $w={12} aria-label="Select options"><Caret /></QuickButton>
          </SelectTool>
          <QuickButton aria-label="Rebuild"><Icon name="traffic" /></QuickButton>
          <Spacer $w={5} />
          <QuickButton aria-label="File properties"><Icon name="prop" /></QuickButton>
          <Spacer $w={5} />
          <QuickButton aria-label="Options"><Icon name="options" /></QuickButton>
          <QuickButton $w={16} aria-label="More options"><Caret /></QuickButton>
          <Spacer $w={14}>.</Spacer>
          <QuickButton aria-label="Help"><Icon name="help" size={15} /></QuickButton>
          <QuickButton aria-label="Help options"><Caret /></QuickButton>
        </QuickBar>
      </TopBar>

      <Ribbon>
        {ribbon.map((b, i) =>
          b === "|" ? <Divider key={i} /> : (
            <RibbonButton key={i} $w={b.w} $drop={b.drop} $active={b.active} disabled={b.off}>
              <Icon name={b.icon} />
              <span>{b.label}</span>
              {b.drop && <Caret />}
            </RibbonButton>
          ),
        )}
      </Ribbon>

      <Body>
        <Main>
          <TabRow>
            {["Assembly", "Layout", "Sketch", "Evaluate", "Office Products", "Flow Simulation"].map((t, i) => (
              <CommandTab key={t} $active={i === 0}>{t}</CommandTab>
            ))}
            <WindowButtons>
              {winIcons.map(([n, d]) => (
                <button key={n} aria-label={n}><svg width="16" height="14"><path d={d} fill="#f4f5fa" stroke="#777a88" /></svg></button>
              ))}
            </WindowButtons>
          </TabRow>

          <Columns>
            <SidePanel>
              <SideTabs>
                {["asmTree", "prop", "config", "ball", "flow"].map((n) => (
                  <SideTab key={n} aria-label={n} $active={n === "flow"}><Icon name={n} /></SideTab>
                ))}
              </SideTabs>
              <Tree $h={78} $top={5}><Rows rows={projectRows} /></Tree>
              <Scrollbar end={12} />
              <Tree $h={5} as="div" />
              <Splitter><Grip /></Splitter>
              <Tree><Rows rows={studyRows} /></Tree>
              <Scrollbar end={9} />
              <Tree $h={2} as="div" />
            </SidePanel>

            <Viewport>
              <Model />
              <ViewTools>
                {viewTools.map(([n, drop]) => (
                  <button key={n} aria-label={n}><Icon name={n} />{drop && <Caret />}</button>
                ))}
              </ViewTools>
              <PaneTabs>
                {["home", "library", "folder", "palette", "ball", "prop"].map((n) => (
                  <PaneTab key={n} aria-label={n} $active={n === "ball"}><Icon name={n} /></PaneTab>
                ))}
              </PaneTabs>
            </Viewport>
          </Columns>

          <BottomTabs>
            {["M3 1V8M9 1L5 4.500L9 8Z", "M7 1L3 4.500L7 8Z", "M3 1L7 4.500L3 8Z", "M7 1V8M1 1L5 4.500L1 8Z"].map((d, i) => (
              <NavButton key={d} aria-label={["First", "Previous", "Next", "Last"][i]}>
                <svg width="10" height="9"><path d={d} fill="#8a8ca0" stroke="#8a8ca0" /></svg>
              </NavButton>
            ))}
            <StudyTab $active>Model</StudyTab>
            <StudyTab>Motion Study 1</StudyTab>
          </BottomTabs>

          <ContextMenu>
            {["General Settings...", "Units...", "Component Control", "Initial Mesh...", "Calculation Control Options...", "Display All Callouts"].map((t) => (
              <li key={t}><MenuItem $hover={t === "Units..."}>{t}</MenuItem></li>
            ))}
          </ContextMenu>
          <RedFrame />
        </Main>

        <TaskPane>
          <PaneTitle>
            <svg width="10" height="9"><path d="M4.500 0L.8 4.500L4.500 9M9 0L5.300 4.500L9 9" fill="none" stroke="#2c2f62" /></svg>
            Appearances, Scenes, and Decals
          </PaneTitle>
          <PaneTools>
            {["ballGray", "folderGray", "newFolderGray", "refresh", "upGray"].map((n) => (
              <button key={n} aria-label={n}><Icon name={n} /></button>
            ))}
          </PaneTools>
          <Tree $h={176} $top={8}><Rows rows={paneRows} slot={20} /></Tree>
          <Splitter />
          <Hint>Select items to drag and drop</Hint>
          <Splitter $shift={64}><Grip dark /></Splitter>
          <PaneRest />
        </TaskPane>
      </Body>

      <StatusBar>
        <span>SolidWorks Professional 2013 x64 Edition</span>
        <span>Fully Defined</span>
        <Spacer $w={18} />
        <span>Editing Assembly</span>
        <Spacer $w={42} />
        <span>MMGS</span>
        <Spacer $w={12} />
        <svg width="6" height="8"><path d="M0 8L3 4L6 8Z" fill="#333" /></svg>
        <Spacer $w={13} />
        <Icon name="helpBox" />
      </StatusBar>
    </Window>
  );
}
